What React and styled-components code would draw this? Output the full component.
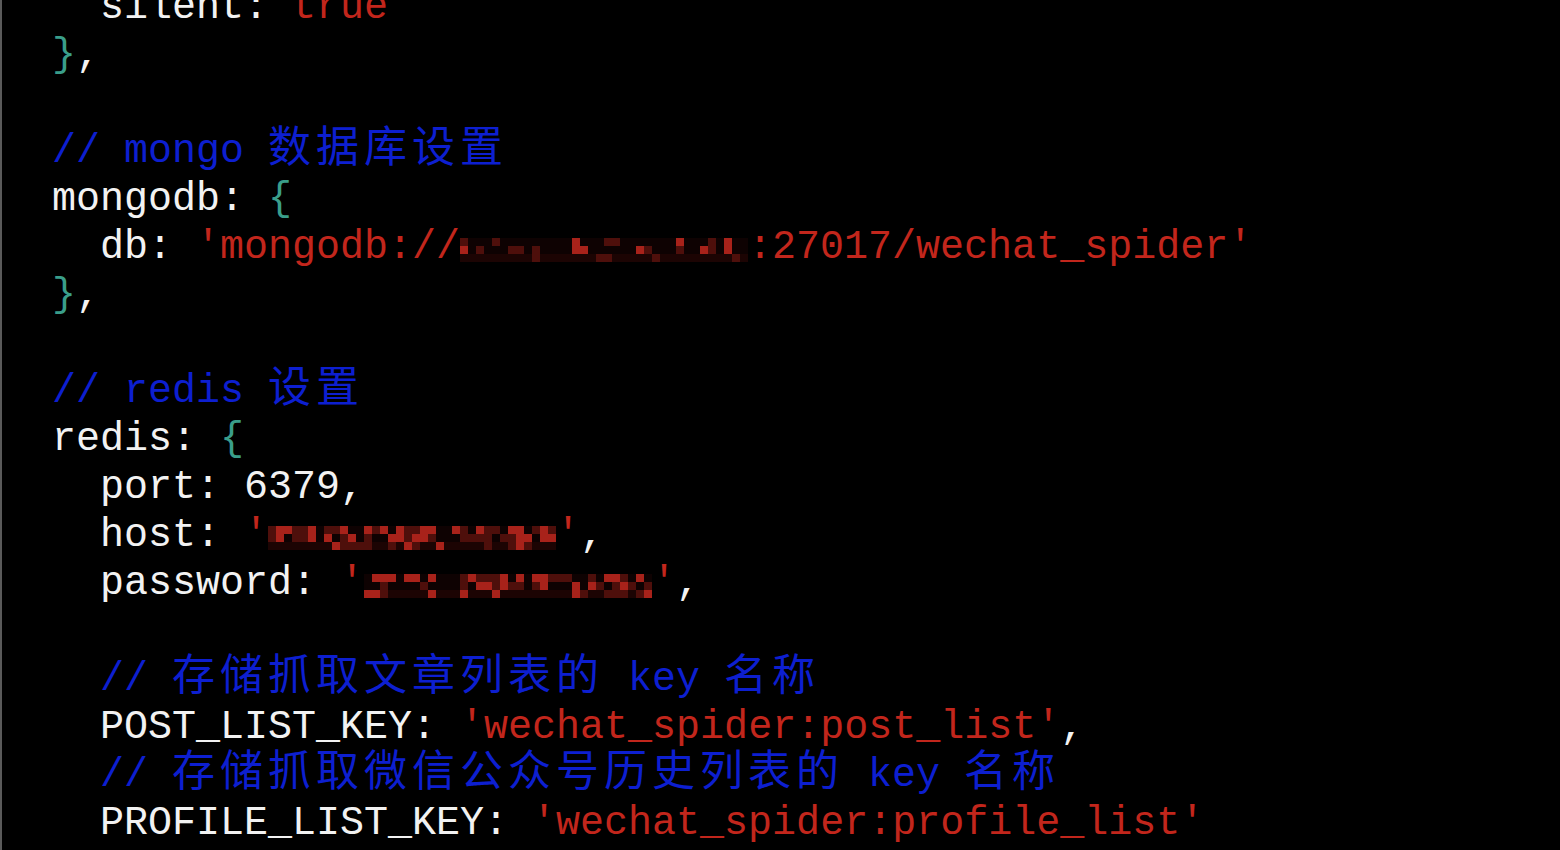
import React from 'react';
import styled, { createGlobalStyle } from 'styled-components';

const GlobalStyle = createGlobalStyle`
  html, body {
    margin: 0;
    padding: 0;
    background: #000;
  }
`;

const Terminal = styled.div`
  height: 850px;
  overflow: hidden;
  background: #000;
  border-left: 2px solid #5a5a5a;
  padding-left: 50px;
  box-sizing: border-box;
`;

const Code = styled.div`
  margin-top: -16px;
  font-family: "Liberation Mono", "Courier New", monospace;
  font-size: 40px;
  line-height: 48px;
  color: #f2f2f2;
`;

const Line = styled.div`
  height: 48px;
  white-space: pre;
`;

const Tok = styled.span`
  color: ${p => ({
    key: '#f2f2f2',
    str: '#c2261c',
    brace: '#3a9e8a',
    comment: '#0d1fd0',
  }[p.$kind] || '#f2f2f2')};
`;

const Cjk = styled.span`
  font-family: "Noto Sans CJK SC", sans-serif;
  font-size: 43px;
  line-height: 0;
  letter-spacing: 5px;
`;

const MosaicBox = styled.span`
  display: inline-block;
  vertical-align: top;
  height: 48px;
  width: ${p => p.$cols * 24}px;
`;

const Cursor = styled.span`
  display: inline-block;
  vertical-align: top;
  width: 23px;
  height: 44px;
  margin-top: 2px;
  background: #6fe04a;
`;

const CJK_RE = /([\u3400-\u9fff]+)/;

function Comment({ text }) {
  const parts = text.split(CJK_RE);
  return (
    <Tok $kind="comment">
      {parts.map((part, i) =>
        CJK_RE.test(part) ? <Cjk key={i}>{part}</Cjk> : part
      )}
    </Tok>
  );
}

// pixelated (censored) address, drawn as a block mosaic
function Mosaic({ cols, seed = 1, faint = false }) {
  const cell = 8;
  const w = cols * 24;
  const rows = [
    { y: 14, bright: 0.35, mid: 0.25 },
    { y: 22, bright: 0.3, mid: 0.3 },
    { y: 30, bright: 0.12, mid: 0.3 },
  ];
  let s = seed * 9301 + 49297;
  const rnd = () => {
    s = (s * 9301 + 49297) % 233280;
    return s / 233280;
  };
  const rects = [];
  rows.forEach((row, r) => {
    for (let x = 0; x < w; x += cell) {
      const v = rnd();
      let fill = r === 2 ? '#1c0403' : '#0e0202';
      const b = faint ? row.bright * 0.45 : row.bright;
      const m = faint ? row.mid * 0.5 : row.mid;
      if (v < b) fill = '#a8221a';
      else if (v < b + m) fill = '#4e0f0b';
      rects.push(<rect key={`${r}-${x}`} x={x} y={row.y} width={cell} height={cell} fill={fill} />);
    }
  });
  return (
    <MosaicBox $cols={cols}>
      <svg width={w} height="48" viewBox={`0 0 ${w} 48`}>
        {rects}
      </svg>
    </MosaicBox>
  );
}

export default function App() {
  return (
    <>
      <GlobalStyle />
      <Terminal>
        <Code>
          <Line><Tok $kind="key">{'  silent: '}</Tok><Tok $kind="str">true</Tok></Line>
          <Line><Tok $kind="brace">{'}'}</Tok>,</Line>
          <Line />
          <Line><Comment text="// mongo 数据库设置" /></Line>
          <Line><Tok $kind="key">{'mongodb: '}</Tok><Tok $kind="brace">{'{'}</Tok></Line>
          <Line>
            <Tok $kind="key">{'  db: '}</Tok>
            <Tok $kind="str">{"'mongodb://"}</Tok>
            <Mosaic cols={12} seed={3} faint />
            <Tok $kind="str">{":27017/wechat_spider'"}</Tok>
          </Line>
          <Line><Tok $kind="brace">{'}'}</Tok>,</Line>
          <Line />
          <Line><Comment text="// redis 设置" /></Line>
          <Line><Tok $kind="key">{'redis: '}</Tok><Tok $kind="brace">{'{'}</Tok></Line>
          <Line><Tok $kind="key">{'  port: 6379,'}</Tok></Line>
          <Line>
            <Tok $kind="key">{'  host: '}</Tok>
            <Tok $kind="str">'</Tok>
            <Mosaic cols={12} seed={7} />
            <Tok $kind="str">'</Tok>,
          </Line>
          <Line>
            <Tok $kind="key">{'  password: '}</Tok>
            <Tok $kind="str">'</Tok>
            <Mosaic cols={12} seed={11} />
            <Tok $kind="str">'</Tok>,
          </Line>
          <Line />
          <Line>{'  '}<Comment text="// 存储抓取文章列表的 key 名称" /></Line>
          <Line>
            <Tok $kind="key">{'  POST_LIST_KEY: '}</Tok>
            <Tok $kind="str">{"'wechat_spider:post_list'"}</Tok>,
          </Line>
          <Line>{'  '}<Comment text="// 存储抓取微信公众号历史列表的 key 名称" /></Line>
          <Line>
            <Tok $kind="key">{'  PROFILE_LIST_KEY: '}</Tok>
            <Tok $kind="str">{"'wechat_spider:profile_list'"}</Tok>
          </Line>
          <Line>{' '}<Cursor /></Line>
        </Code>
      </Terminal>
    </>
  );
}
